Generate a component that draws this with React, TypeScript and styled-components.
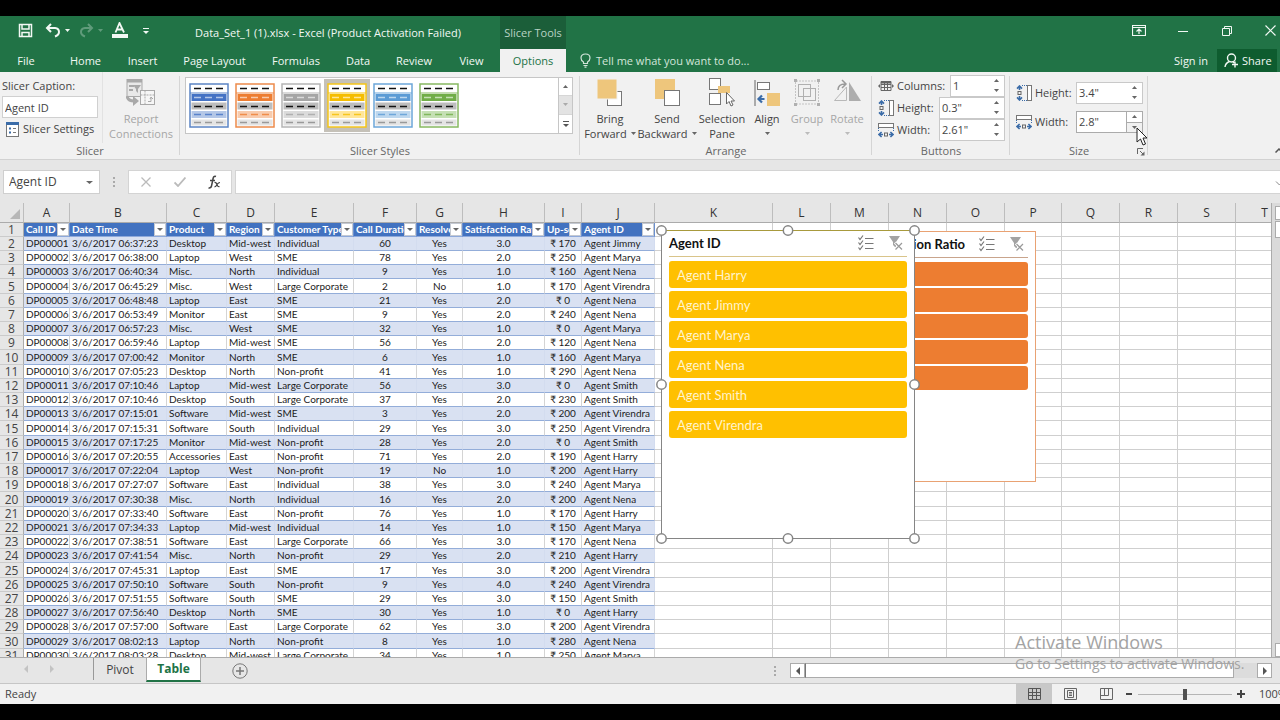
import React from 'react';
import styled, { createGlobalStyle, css } from 'styled-components';

const UI_FONT = '"Open Sans", "Noto Sans", sans-serif';
const CELL_FONT = 'Lato, "Noto Sans", sans-serif';

const GlobalStyle = createGlobalStyle`
  *, *::before, *::after { box-sizing: border-box; }
  body { margin: 0; background: #000; overflow: hidden; }
  button, input { font: inherit; color: inherit; }
  button { border: 0; background: none; padding: 0; cursor: default; }
`;

const Screen = styled.div`
  display: flex;
  flex-direction: column;
  height: 100vh;
  padding: 16px 0;
  background: #000;
  font: 12px/16px ${UI_FONT};
  color: #444;
`;

const Window = styled.main`
  position: relative;
  flex: 1;
  min-height: 0;
  display: flex;
  flex-direction: column;
  background: #e6e6e6;
  overflow: hidden;
`;

/* Title bar and tabs */

const TitleBar = styled.header`
  display: flex;
  height: 33px;
  flex: none;
  background: #217346;
  color: #f2f8f4;
`;

const QuickAccess = styled.div`
  display: flex;
  align-items: center;
  width: 156px;
  padding: 0 0 4px 18px;
  flex: none;
`;

const QuickButton = styled.button<{ $w: number; $dim?: boolean }>`
  width: ${(p) => p.$w}px;
  height: 20px;
  display: flex;
  align-items: center;
  opacity: ${(p) => (p.$dim ? 0.3 : 1)};
`;

const WindowTitle = styled.h1`
  margin: 0;
  width: 344px;
  font-size: 11px;
  font-weight: 400;
  line-height: 34px;
  text-align: center;
  white-space: nowrap;
`;

const ContextTitle = styled.div`
  width: 66px;
  background: #1b5e39;
  color: #b9d3c4;
  font-size: 11px;
  line-height: 34px;
  text-align: center;
  white-space: nowrap;
`;

const WindowControls = styled.div`
  display: flex;
  margin-left: auto;
  padding-bottom: 4px;
  align-items: center;
`;

const ControlButton = styled.button`
  width: 44px;
  height: 28px;
  display: grid;
  place-items: center;
  &:last-child { width: 43px; margin-right: -12px; }
`;

const TabRow = styled.nav`
  display: flex;
  height: 23px;
  flex: none;
  background: #217346;
  color: #f2f8f4;
  font-size: 11px;
`;

const Tab = styled.button<{ $w: number; $active?: boolean; $file?: boolean }>`
  width: ${(p) => p.$w}px;
  line-height: 22px;
  text-align: center;
  white-space: nowrap;
  ${(p) => p.$file && css`margin-right: 4px;`}
  ${(p) =>
    p.$active &&
    css`
      margin-left: 2px;
      background: #f1f1f1;
      color: #217346;
    `}
`;

const TellMe = styled.button`
  display: flex;
  align-items: center;
  gap: 5px;
  margin-left: 14px;
  color: #d3e5da;
  white-space: nowrap;
`;

const Account = styled.div`
  display: flex;
  margin-left: auto;
`;

const SignIn = styled.button`
  padding: 0 9px;
  line-height: 22px;
`;

const Share = styled.button`
  display: flex;
  align-items: center;
  gap: 3px;
  width: 60px;
  margin-right: 3px;
  padding-left: 7px;
  background: #0e5c2f;
`;

/* Ribbon */

const Ribbon = styled.section`
  display: flex;
  flex: none;
  height: 88px;
  background: #f1f1f1;
  border-bottom: 1px solid #d2d2d2;
`;

const Group = styled.div<{ $w: number }>`
  width: ${(p) => p.$w}px;
  flex: none;
  display: flex;
  flex-direction: column;
  position: relative;
  &::after {
    content: '';
    position: absolute;
    right: 0;
    top: 4px;
    bottom: 4px;
    width: 1px;
    background: #d5d5d5;
  }
`;

const GroupBody = styled.div`
  display: flex;
  height: 71px;
`;

const GroupLabel = styled.div`
  display: flex;
  justify-content: center;
  position: relative;
  font-size: 11px;
  line-height: 16px;
  color: #666;
`;

const Launcher = styled.button`
  position: absolute;
  right: 2px;
  top: 4px;
  width: 10px;
  height: 10px;
  line-height: 0;
`;

const CaptionColumn = styled.div`
  width: 103px;
  display: flex;
  flex-direction: column;
  padding: 6px 4px 0 2px;
  border-right: 1px solid #e2e2e2;
`;

const FieldLabel = styled.label`
  font-size: 11px;
  line-height: 16px;
  white-space: nowrap;
`;

const CaptionInput = styled.input`
  height: 22px;
  margin: 2px 0 1px;
  padding: 0 2px;
  border: 1px solid #d0d0d0;
  background: #fff;
  font-size: 11px;
`;

const SettingsButton = styled.button`
  display: flex;
  align-items: center;
  gap: 4px;
  height: 20px;
  padding-left: 4px;
  font-size: 11px;
  white-space: nowrap;
`;

const BigButton = styled.button<{ $w: number; $disabled?: boolean }>`
  width: ${(p) => p.$w}px;
  display: flex;
  flex-direction: column;
  align-items: center;
  padding-top: 6px;
  font-size: 11px;
  line-height: 15px;
  white-space: nowrap;
  color: ${(p) => (p.$disabled ? '#a6a6a6' : '#444')};
  & > svg { flex: none; margin-bottom: 3px; }
`;

const LabelLine = styled.span`
  display: flex;
  align-items: center;
  gap: 4px;
  min-height: 15px;
`;

const ArrangeBody = styled(GroupBody)`
  padding-left: 3px;
`;

const Gallery = styled.div`
  display: flex;
  width: 388px;
  height: 57px;
  margin: 5px 0 0 5px;
  border: 1px solid #c6c6c6;
  background: #fff;
`;

const GalleryItem = styled.button<{ $selected?: boolean }>`
  width: 46px;
  display: grid;
  place-items: center;
  height: 53px;
  margin-top: 1px;
  background: ${(p) => (p.$selected ? '#c5c1b8' : 'transparent')};
`;

const GalleryScroll = styled.div`
  width: 14px;
  margin-left: auto;
  display: grid;
  grid-template-rows: 1fr 1fr 1fr;
  border-left: 1px solid #c6c6c6;
`;

const ScrollButton = styled.button<{ $off?: boolean }>`
  display: grid;
  place-items: center;
  background: ${(p) => (p.$off ? '#e3e3e3' : '#fff')};
  border-bottom: 1px solid #d6d6d6;
  &:last-child { border-bottom: 0; }
`;

const Fields = styled.div<{ $gap: number; $top: number; $left: number }>`
  flex: 1;
  display: flex;
  flex-direction: column;
  gap: ${(p) => p.$gap}px;
  padding: ${(p) => p.$top}px 5px 0 ${(p) => p.$left}px;
`;

const Field = styled.div`
  display: flex;
  align-items: center;
  gap: 3px;
  height: 21px;
  & > svg { flex: none; }
`;

const Spinner = styled.div<{ $w: number; $active?: boolean }>`
  display: flex;
  width: ${(p) => p.$w}px;
  height: 22px;
  margin-left: auto;
  flex: none;
  border: 1px solid ${(p) => (p.$active ? '#ababab' : '#c9c9c9')};
  background: #fff;
`;

const SpinnerInput = styled.input`
  flex: 1;
  min-width: 0;
  border: 0;
  padding: 0 2px;
  font-size: 11px;
  background: transparent;
  outline: 0;
`;

const SpinnerArrows = styled.div<{ $active?: boolean }>`
  width: 16px;
  display: grid;
  grid-template-rows: 1fr 1fr;
  ${(p) =>
    p.$active &&
    css`
      border-left: 1px solid #ababab;
      & > button + button { border-top: 1px solid #ababab; background: #f1f1f1; }
    `}
`;

const ArrowButton = styled.button`
  display: grid;
  place-items: center;
`;

const Collapse = styled.button`
  align-self: flex-end;
  margin: 0 -3px 4px auto;
  height: 10px;
  line-height: 0;
`;

/* Formula bar */

const FormulaBar = styled.div`
  display: flex;
  flex: none;
  height: 43px;
  padding: 10px 0 9px 3px;
`;

const NameBox = styled.div`
  display: flex;
  align-items: center;
  width: 97px;
  padding-right: 6px;
  border: 1px solid #cfcfcf;
  background: #fff;
`;

const NameInput = styled.input`
  flex: 1;
  min-width: 0;
  border: 0;
  padding: 0 0 0 5px;
  outline: 0;
  font-size: 12px;
`;

const Dots = styled.span`
  display: grid;
  place-items: center;
  width: 28px;
`;

const FormulaButtons = styled.div`
  display: flex;
  width: 104px;
  margin-right: 3px;
  border: 1px solid #d4d4d4;
  background: #fff;
  & > button { flex: 1; display: grid; place-items: center; }
`;

const FormulaInput = styled.input`
  flex: 1;
  min-width: 0;
  border: 1px solid #d4d4d4;
  border-right: 0;
  background: #fff;
  outline: 0;
`;

const FormulaExpand = styled.button`
  width: 6px;
  overflow: hidden;
  border: solid #d4d4d4;
  border-width: 1px 0;
  background: #fff;
`;

/* Worksheet */

const SheetArea = styled.section`
  position: relative;
  flex: 1;
  min-height: 0;
  display: flex;
  overflow: hidden;
  border-bottom: 1px solid #ababab;
`;

const SheetView = styled.div`
  flex: 1;
  min-width: 0;
  overflow: hidden;
  border-right: 1px solid #ababab;
  background: #fff;
`;

const SheetTable = styled.table`
  width: 100%;
  min-width: 1294px;
  table-layout: fixed;
  border-collapse: separate;
  border-spacing: 0;
  font: 10px/13px ${CELL_FONT};
  color: #1c1c1c;
  tbody tr { height: 14px; }
  tbody tr:nth-child(5n) { height: 15px; }
  td, th { padding: 0; overflow: hidden; white-space: nowrap; }
`;

const ColumnHead = styled.th`
  height: 20px;
  background: #e6e6e6;
  border-right: 1px solid #bdbdbd;
  border-bottom: 1px solid #ababab;
  font: 400 12px/19px ${UI_FONT};
  color: #333;
  text-align: center;
`;

const Corner = styled(ColumnHead)`
  text-align: right;
  vertical-align: bottom;
  line-height: 0;
`;

const RowHead = styled.th`
  background: #e6e6e6;
  border-right: 1px solid #ababab;
  border-bottom: 1px solid #cbcbcb;
  font: 400 12px/13px ${UI_FONT};
  color: #444;
  text-align: center;
`;

const HeaderCell = styled.th`
  background: #4272c0;
  border-bottom: 1px solid #8ea9db;
  border-right: 1px solid #6a90cf;
  color: #fff;
  text-align: left;
`;

const HeaderInner = styled.div`
  display: flex;
  height: 13px;
  padding-left: 2px;
`;

const HeaderText = styled.span`
  flex: 1;
  min-width: 0;
  overflow: hidden;
`;

const FilterButton = styled.button`
  width: 12px;
  height: 13px;
  flex: none;
  display: grid;
  place-items: center;
  border: 1px solid #c4c9d2;
  background: #fff;
`;

const DataCell = styled.td<{ $band: boolean; $center?: boolean }>`
  && { padding-left: ${(p) => (p.$center ? 0 : 2)}px; }
  background: ${(p) => (p.$band ? '#d9e1f2' : '#fff')};
  border-bottom: 1px solid #93add9;
  border-right: 1px solid ${(p) => (p.$band ? '#d3dcef' : '#d4d4d4')};
  text-align: ${(p) => (p.$center ? 'center' : 'left')};
`;

const EmptyCell = styled.td`
  border-bottom: 1px solid #cfcfcf;
  border-right: 1px solid #cfcfcf;
`;

const VerticalScroll = styled.div`
  width: 8px;
  flex: none;
  display: flex;
  flex-direction: column;
  gap: 1px;
  padding: 3px 0 0 3px;
  overflow: hidden;
  background: #dadada;
`;

const ScrollPiece = styled.button<{ $h: number; $end?: boolean }>`
  width: 15px;
  height: ${(p) => p.$h}px;
  flex: none;
  border: 1px solid #ababab;
  background: #fff;
  ${(p) => p.$end && css`margin-top: auto;`}
`;

/* Slicers float over the cells */

const Slicer = styled.section<{ $x: number; $y: number; $w: number; $h: number; $accent: string }>`
  position: absolute;
  left: ${(p) => p.$x}px;
  top: ${(p) => p.$y}px;
  width: ${(p) => p.$w}px;
  height: ${(p) => p.$h}px;
  padding: 0 7px;
  border: 1px solid ${(p) => p.$accent};
  background: #fff;
`;

const SlicerHead = styled.div<{ $accent: string }>`
  display: flex;
  align-items: center;
  height: 26px;
  margin-bottom: 4px;
  padding: 0 3px 2px 0;
  border-bottom: 1px solid ${(p) => p.$accent};
`;

const SlicerTitle = styled.h2<{ $right?: boolean }>`
  flex: 1;
  margin: 0;
  font: 700 13px/16px ${CELL_FONT};
  color: #111;
  text-align: ${(p) => (p.$right ? 'right' : 'left')};
  white-space: nowrap;
`;

const SlicerTool = styled.button`
  width: 16px;
  height: 16px;
  margin-left: 14px;
  line-height: 0;
`;

const SlicerList = styled.div<{ $gap: number }>`
  display: flex;
  flex-direction: column;
  gap: ${(p) => p.$gap}px;
`;

const SlicerItem = styled.button<{ $h: number; $color: string }>`
  height: ${(p) => p.$h}px;
  padding-left: 8px;
  border-radius: 3px;
  background: ${(p) => p.$color};
  color: #fff3cc;
  font: 13px/16px ${CELL_FONT};
  text-align: left;
`;

const SelectionFrame = styled.svg`
  position: absolute;
  left: 655px;
  top: 21px;
`;

/* Bottom bars */

const SheetTabs = styled.div`
  display: flex;
  flex: none;
  height: 26px;
  border-bottom: 1px solid #c6c6c6;
`;

const TabArrows = styled.div`
  display: flex;
  gap: 22px;
  width: 94px;
  height: 22px;
  padding-left: 24px;
  align-items: center;
  border-right: 1px solid #999;
`;

const SheetTab = styled.button<{ $w: number; $active?: boolean }>`
  width: ${(p) => p.$w}px;
  height: 24px;
  line-height: 22px;
  ${(p) =>
    p.$active &&
    css`
      background: #fff;
      color: #217346;
      font-weight: 700;
      border: solid #ababab;
      border-width: 0 1px;
      border-bottom: 2px solid #217346;
    `}
`;

const AddSheet = styled.button`
  margin-left: 30px;
  width: 18px;
  height: 25px;
  display: grid;
  place-items: center;
`;

const HorizontalScroll = styled.div`
  display: flex;
  align-items: center;
  width: 508px;
  margin-left: auto;
`;

const HTrack = styled.div`
  display: flex;
  width: 482px;
  height: 15px;
  margin-left: 12px;
  background: #dcdcdc;
`;

const HButton = styled.button`
  width: 15px;
  display: grid;
  place-items: center;
  border: 1px solid #ababab;
  background: #fff;
`;

const HThumb = styled.button`
  width: 429px;
  margin-right: auto;
  border: 1px solid #ababab;
  border-left-color: #777;
  background: #fff;
`;

const StatusBar = styled.footer`
  display: flex;
  flex: none;
  height: 20px;
  align-items: center;
  background: #f1f1f1;
  font-size: 11px;
  overflow: hidden;
`;

const StatusText = styled.span`
  padding-left: 5px;
`;

const StatusRight = styled.div`
  display: flex;
  align-items: center;
  height: 20px;
  margin-left: auto;
`;

const ViewButton = styled.button<{ $active?: boolean }>`
  width: 36px;
  height: 20px;
  display: grid;
  place-items: center;
  background: ${(p) => (p.$active ? '#c8c8c8' : 'transparent')};
`;

const ZoomStep = styled.button`
  width: 10px;
  height: 20px;
  display: grid;
  place-items: center;
`;

const ZoomSlider = styled.input`
  appearance: none;
  width: 94px;
  height: 16px;
  margin: 0 4px;
  background: linear-gradient(#b5b5b5, #b5b5b5) center / 100% 1px no-repeat;
  &::-webkit-slider-thumb {
    appearance: none;
    width: 4px;
    height: 11px;
    background: #505050;
  }
`;

const ZoomLabel = styled.button`
  width: 21px;
  margin-left: 13px;
  white-space: nowrap;
  text-align: left;
  overflow: hidden;
`;

const Watermark = styled.aside`
  position: absolute;
  right: 42px;
  bottom: 30px;
  width: 223px;
  color: #a3a3a3;
  font-size: 14px;
  line-height: 20px;
  white-space: nowrap;
  pointer-events: none;
`;

const WatermarkTitle = styled.div`
  font-size: 18px;
  line-height: 24px;
`;

const Pointer = styled.svg`
  position: absolute;
  left: 1136px;
  top: 111px;
  pointer-events: none;
`;

/* Data */

const SHEET_COLUMNS: [string, number][] = [
  ['A', 46], ['B', 97], ['C', 60], ['D', 48], ['E', 79], ['F', 63], ['G', 46], ['H', 82], ['I', 37], ['J', 73],
  ['K', 118], ['L', 58], ['M', 58], ['N', 58], ['O', 58], ['P', 57], ['Q', 58], ['R', 58], ['S', 58],
];
const HEADERS = ['Call ID', 'Date Time', 'Product', 'Region', 'Customer Type', 'Call Duration', 'Resolved', 'Satisfaction Ratio', 'Up-sell', 'Agent ID'];
const CENTERED = [5, 6, 7, 8];

const RECORDS = `06:37:23|Desktop|Mid-west|Individual|60|Yes|3.0|170|Jimmy
06:38:00|Laptop|West|SME|78|Yes|2.0|250|Marya
06:40:34|Misc.|North|Individual|9|Yes|1.0|160|Nena
06:45:29|Misc.|West|Large Corporate|2|No|1.0|170|Virendra
06:48:48|Laptop|East|SME|21|Yes|2.0|0|Nena
06:53:49|Monitor|East|SME|9|Yes|2.0|240|Nena
06:57:23|Misc.|West|SME|32|Yes|1.0|0|Marya
06:59:46|Laptop|Mid-west|SME|56|Yes|2.0|120|Nena
07:00:42|Monitor|North|SME|6|Yes|1.0|160|Marya
07:05:23|Desktop|North|Non-profit|41|Yes|1.0|290|Nena
07:10:46|Laptop|Mid-west|Large Corporate|56|Yes|3.0|0|Smith
07:10:46|Desktop|South|Large Corporate|37|Yes|2.0|230|Smith
07:15:01|Software|Mid-west|SME|3|Yes|2.0|200|Virendra
07:15:31|Software|South|Individual|29|Yes|3.0|250|Virendra
07:17:25|Monitor|Mid-west|Non-profit|28|Yes|2.0|0|Smith
07:20:55|Accessories|East|Non-profit|71|Yes|2.0|190|Harry
07:22:04|Laptop|West|Non-profit|19|No|1.0|200|Harry
07:27:07|Software|East|Individual|38|Yes|3.0|240|Marya
07:30:38|Misc.|North|Individual|16|Yes|2.0|200|Nena
07:33:40|Software|East|Non-profit|76|Yes|1.0|170|Harry
07:34:33|Laptop|Mid-west|Individual|14|Yes|1.0|150|Marya
07:38:51|Software|East|Large Corporate|66|Yes|3.0|170|Nena
07:41:54|Misc.|North|Non-profit|29|Yes|2.0|210|Harry
07:45:31|Laptop|East|SME|17|Yes|3.0|200|Virendra
07:50:10|Software|South|Non-profit|9|Yes|4.0|240|Virendra
07:51:55|Software|South|SME|29|Yes|3.0|150|Smith
07:56:40|Desktop|North|SME|30|Yes|1.0|0|Harry
07:57:00|Software|East|Large Corporate|62|Yes|3.0|200|Virendra
08:02:13|Laptop|North|Non-profit|8|Yes|1.0|280|Nena
08:03:28|Desktop|Mid-west|Large Corporate|34|Yes|1.0|250|Marya`
  .split('\n')
  .map((line, i) => {
    const [time, product, region, customer, duration, resolved, rating, upsell, agent] = line.split('|');
    return [
      `DP${String(i + 1).padStart(5, '0')}`, `3/6/2017 ${time}`, product, region, customer,
      duration, resolved, rating, `₹ ${upsell}`, `Agent ${agent}`,
    ];
  });

const AGENTS = ['Agent Harry', 'Agent Jimmy', 'Agent Marya', 'Agent Nena', 'Agent Smith', 'Agent Virendra'];
const RATINGS = ['1.0', '2.0', '3.0', '4.0', '5.0'];

const STYLES = [
  { name: 'Blue', edge: '#5b84c4', main: '#4472c4', soft: '#b4c7e7' },
  { name: 'Orange', edge: '#ed8b4b', main: '#ed7d31', soft: '#f8cbad' },
  { name: 'Gray', edge: '#b5b5b5', main: '#a5a5a5', soft: '#dbdbdb' },
  { name: 'Gold', edge: '#f5c518', main: '#f5bd00', soft: '#ffe699' },
  { name: 'Light blue', edge: '#6ca6d9', main: '#5b9bd5', soft: '#bdd7ee' },
  { name: 'Green', edge: '#86b860', main: '#70ad47', soft: '#c5e0b4' },
];

/* Icons */

const Triangle = ({ up, size = 5, color = '#666' }: { up?: boolean; size?: number; color?: string }) => (
  <svg width={size} height={3} viewBox="0 0 6 3" preserveAspectRatio="none">
    <path d={up ? 'M0 3L3 0L6 3Z' : 'M0 0H6L3 3Z'} fill={color} />
  </svg>
);

const SideArrow = ({ left, color = '#555' }: { left?: boolean; color?: string }) => (
  <svg width="4" height="8" viewBox="0 0 4 8">
    <path d={left ? 'M4 0V8L0 4Z' : 'M0 0V8L4 4Z'} fill={color} />
  </svg>
);

const StyleThumb = ({ edge, main, soft }: { edge: string; main: string; soft: string }) => (
  <svg width="40" height="45" viewBox="0 0 40 45">
    <rect x="1" y="1" width="38" height="43" fill="#fff" stroke={edge} strokeWidth="1.5" />
    <path d="M1 10H39" stroke={edge} />
    <rect x="2.5" y="11" width="35" height="7" fill={main} />
    <rect x="2.5" y="19.5" width="35" height="7" fill="#bdbdbd" />
    <rect x="2.5" y="28" width="35" height="7" fill={soft} />
    <rect x="2.5" y="36.5" width="35" height="6" fill="#e4e4e4" />
    <g strokeWidth="1.4" strokeDasharray="7 4">
      <path d="M5 5.5H35" stroke="#111" />
      <path d="M5 14.5H35" stroke={soft} />
      <path d="M5 23.5H35" stroke="#111" />
      <path d="M5 31.5H35" stroke={main} strokeOpacity=".8" />
      <path d="M5 39.5H35" stroke="#999" />
    </g>
  </svg>
);

const HeightIcon = () => (
  <svg width="16" height="16" viewBox="0 0 16 16" fill="none">
    <path d="M3.5 1.2V5M1 3.6L3.5 1L6 3.6M3.5 15V11M1 12.4L3.5 15L6 12.4" stroke="#3b6ca8" strokeWidth="1.6" />
    <rect x="2" y="6.5" width="3" height="3" stroke="#666" />
    <path d="M6 .5H11M6 15.5H11" stroke="#3b6ca8" strokeDasharray="1 1" />
    <rect x="11.5" y=".5" width="4" height="15" stroke="#777" fill="#fff" />
  </svg>
);

const WidthIcon = () => (
  <svg width="16" height="16" viewBox="0 0 16 16" fill="none">
    <rect x=".5" y="1.5" width="15" height="4" stroke="#777" fill="#fff" />
    <path d="M.5 6V10M15.5 6V10" stroke="#3b6ca8" strokeDasharray="1 1" />
    <path d="M1 12.5H5M3.6 10L1 12.5L3.6 15M15 12.5H11M12.4 10L15 12.5L12.4 15" stroke="#3b6ca8" strokeWidth="1.6" />
    <rect x="6.5" y="11" width="3" height="3" stroke="#666" />
  </svg>
);

const ColumnsIcon = () => (
  <svg width="16" height="16" viewBox="0 0 16 16" fill="none">
    <path d="M3 3.5H13V12.5H3ZM3 6.5H13M3 9.5H13M6.5 5V12.5M9.5 5V12.5" stroke="#666" />
    <path d="M3 4H13V5.5H3Z" fill="#666" />
    <path d="M2 6L0 8L2 10ZM14 6L16 8L14 10Z" fill="#666" />
  </svg>
);

const ReportIcon = () => (
  <svg width="30" height="30" viewBox="0 0 30 30" fill="none" stroke="#a9a9a9">
    <rect x="1" y="1.5" width="15" height="17" fill="#e9e9e9" />
    <path d="M1 3H16" strokeWidth="3" />
    <path d="M3 8H8M3 12H7" strokeWidth="2" />
    <path d="M7 7H15L12 11V15L10 13V11Z" fill="#a9a9a9" stroke="none" />
    <rect x="14.5" y="12.5" width="14" height="14" fill="#f6f6f6" />
    <path d="M14.5 17H28.500M19 12.500V26.500" strokeDasharray="2 1" />
    <path d="M22 23.500H25V19.500M24 21L25 19L27 21" />
    <path d="M1 18Q2 23 8 23" strokeWidth="3" />
    <path d="M7 18L13 23L7 28Z" fill="#a9a9a9" stroke="none" />
  </svg>
);

const SlicerTools = () => (
  <>
    <SlicerTool aria-label="Multi-select">
      <svg width="16" height="16" viewBox="0 0 16 16" fill="none" stroke="#777">
        <path d="M.5 2.500L2 4.500L5 .5M.5 7.500L2 9.500L5 5.500M.5 12.500L2 14.500L5 10.500" strokeWidth="1.200" />
        <path d="M7 3.500H15.500M7 8.500H15.500M7 13.500H15.500" />
      </svg>
    </SlicerTool>
    <SlicerTool aria-label="Clear filter">
      <svg width="16" height="16" viewBox="0 0 16 16">
        <path d="M1 1H12L8 7V13L5 10V7Z" fill="#a3a3a3" />
        <path d="M7 7.500L14 14.500M14 7.500L7 14.500" stroke="#fff" strokeWidth="3" />
        <path d="M7.500 8L14 14.500M14 8L7.500 14.500" stroke="#999" strokeWidth="1.200" />
      </svg>
    </SlicerTool>
  </>
);

/* Composite controls */

const SpinField = ({ id, label, value, width, active, icon }: {
  id: string; label: string; value: string; width: number; active?: boolean; icon: React.ReactNode;
}) => (
  <Field>
    {icon}
    <FieldLabel htmlFor={id}>{label}</FieldLabel>
    <Spinner $w={width} $active={active}>
      <SpinnerInput id={id} defaultValue={value} />
      <SpinnerArrows $active={active}>
        <ArrowButton aria-label={`Increase ${label}`}><Triangle up /></ArrowButton>
        <ArrowButton aria-label={`Decrease ${label}`}><Triangle /></ArrowButton>
      </SpinnerArrows>
    </Spinner>
  </Field>
);

const TopBars = () => (
  <>
    <TitleBar>
      <QuickAccess>
        <QuickButton $w={27} aria-label="Save">
          <svg width="15" height="15" viewBox="0 0 15 15" fill="none" stroke="currentColor" strokeWidth="1.500">
            <path d="M1.500 1.500H13.500V13.500H1.500ZM4 1.500V6H11V1.500M4 13.500V9.500H11V13.500" />
          </svg>
        </QuickButton>
        <QuickButton $w={34} aria-label="Undo">
          <svg width="26" height="15" viewBox="0 0 26 15" fill="none" stroke="currentColor" strokeWidth="2">
            <path d="M6 1L2 5L6 9M2 5H10Q14 5.500 14 9Q14 12 10 13.500" />
            <path d="M20 6H25L22.500 9Z" fill="currentColor" stroke="none" />
          </svg>
        </QuickButton>
        <QuickButton $w={33} $dim aria-label="Redo">
          <svg width="26" height="15" viewBox="0 0 26 15" fill="none" stroke="currentColor" strokeWidth="2">
            <path d="M9 1L13 5L9 9M13 5H6Q2 5.500 2 9Q2 12 6 13.500" />
            <path d="M19 6H24L21.500 9Z" fill="currentColor" stroke="none" />
          </svg>
        </QuickButton>
        <QuickButton $w={31} aria-label="Font color">
          <svg width="16" height="17" viewBox="0 0 16 17" fill="none" stroke="currentColor">
            <path d="M3.500 10.500L7.500 1L12 10.500M5 7.500H10.500" strokeWidth="1.800" />
            <rect x="0" y="12" width="16" height="4" fill="currentColor" stroke="none" />
          </svg>
        </QuickButton>
        <QuickButton $w={8} aria-label="Customize toolbar">
          <svg width="6" height="8" viewBox="0 0 6 8"><path d="M0 1.500H6" stroke="currentColor" /><path d="M0 4H6L3 7Z" fill="currentColor" /></svg>
        </QuickButton>
      </QuickAccess>
      <WindowTitle>Data_Set_1 (1).xlsx - Excel (Product Activation Failed)</WindowTitle>
      <ContextTitle>Slicer Tools</ContextTitle>
      <WindowControls>
        <ControlButton aria-label="Ribbon display options">
          <svg width="14" height="11" viewBox="0 0 14 11" fill="none" stroke="currentColor"><path d="M.5 .5H13.500V10.500H.5ZM.5 2.500H13.500M7 9V4.500M4.500 6.500L7 4L9.500 6.500" strokeWidth="1.200" /></svg>
        </ControlButton>
        <ControlButton aria-label="Minimize">
          <svg width="10" height="10" viewBox="0 0 10 10"><path d="M0 5.500H10" stroke="currentColor" /></svg>
        </ControlButton>
        <ControlButton aria-label="Restore">
          <svg width="10" height="10" viewBox="0 0 10 10" fill="none" stroke="currentColor"><path d="M.5 2.500H7.500V9.500H.5ZM2.500 2.500V.5H9.500V7.500H7.500" /></svg>
        </ControlButton>
        <ControlButton aria-label="Close">
          <svg width="11" height="11" viewBox="0 0 11 11"><path d="M.5 .5L10.500 10.500M10.500 .5L.5 10.500" stroke="currentColor" strokeWidth="1.200" /></svg>
        </ControlButton>
      </WindowControls>
    </TitleBar>
    <TabRow>
      <Tab $w={52} $file>File</Tab>
      <Tab $w={59}>Home</Tab>
      <Tab $w={55}>Insert</Tab>
      <Tab $w={89}>Page Layout</Tab>
      <Tab $w={74}>Formulas</Tab>
      <Tab $w={50}>Data</Tab>
      <Tab $w={62}>Review</Tab>
      <Tab $w={53}>View</Tab>
      <Tab $w={66} $active>Options</Tab>
      <TellMe>
        <svg width="11" height="15" viewBox="0 0 11 15" fill="none" stroke="currentColor" strokeWidth="1.200">
          <path d="M3.500 10.500V9Q1 7.500 1 5Q1 1 5.500 1Q10 1 10 5Q10 7.500 7.500 9V10.500ZM3.500 12.500H7.500M4.500 14.200H6.500" />
        </svg>
        Tell me what you want to do...
      </TellMe>
      <Account>
        <SignIn>Sign in</SignIn>
        <Share>
          <svg width="15" height="15" viewBox="0 0 15 15" fill="none" stroke="currentColor" strokeWidth="1.400">
            <circle cx="7.500" cy="5" r="4" /><path d="M1 14Q1.500 10 5.500 8.500M9 8.500L10 10M8 11.500H14M11 8.500V14.500" />
          </svg>
          Share
        </Share>
      </Account>
    </TabRow>
  </>
);

const RibbonBar = () => (
  <Ribbon>
    <Group $w={180}>
      <GroupBody>
        <CaptionColumn>
          <FieldLabel htmlFor="caption">Slicer Caption:</FieldLabel>
          <CaptionInput id="caption" defaultValue="Agent ID" />
          <SettingsButton>
            <svg width="13" height="15" viewBox="0 0 13 15" fill="none">
              <rect x=".5" y=".5" width="12" height="14" fill="#fff" stroke="#777" />
              <path d="M0 1.500H13" stroke="#3b6ca8" strokeWidth="3" />
              <path d="M3 6.500H5M3 10.500H5" stroke="#3b6ca8" strokeWidth="2" />
              <path d="M7 6.500H10M7 10.500H10" stroke="#777" />
            </svg>
            Slicer Settings
          </SettingsButton>
        </CaptionColumn>
        <BigButton $w={76} $disabled>
          <ReportIcon />
          <LabelLine>Report</LabelLine>
          <LabelLine>Connections</LabelLine>
        </BigButton>
      </GroupBody>
      <GroupLabel>Slicer</GroupLabel>
    </Group>
    <Group $w={400}>
      <GroupBody>
        <Gallery>
          {STYLES.map((s) => (
            <GalleryItem key={s.name} aria-label={`${s.name} slicer style`} $selected={s.name === 'Gold'}>
              <StyleThumb edge={s.edge} main={s.main} soft={s.soft} />
            </GalleryItem>
          ))}
          <GalleryScroll>
            <ScrollButton aria-label="Previous styles"><Triangle up /></ScrollButton>
            <ScrollButton aria-label="Next styles" $off><Triangle color="#aaa" /></ScrollButton>
            <ScrollButton aria-label="More styles">
              <svg width="6" height="6" viewBox="0 0 6 6"><path d="M0 .5H6" stroke="#555" /><path d="M0 3H6L3 6Z" fill="#555" /></svg>
            </ScrollButton>
          </GalleryScroll>
        </Gallery>
      </GroupBody>
      <GroupLabel>Slicer Styles</GroupLabel>
    </Group>
    <Group $w={292}>
      <ArrangeBody>
        <BigButton $w={54}>
          <svg width="30" height="30" viewBox="0 0 30 30"><rect x="12.500" y="13.500" width="14" height="14" fill="#fff" stroke="#777" /><rect x="2" y="1" width="20" height="20" fill="#eec67c" stroke="#f1f1f1" /></svg>
          <LabelLine>Bring</LabelLine>
          <LabelLine>Forward <Triangle /></LabelLine>
        </BigButton>
        <BigButton $w={60}>
          <svg width="30" height="30" viewBox="0 0 30 30"><rect x="3" y="1" width="20" height="20" fill="#eec67c" /><rect x="12.500" y="12.500" width="15" height="15" fill="#fff" stroke="#777" /></svg>
          <LabelLine>Send</LabelLine>
          <LabelLine>Backward <Triangle /></LabelLine>
        </BigButton>
        <BigButton $w={50}>
          <svg width="30" height="30" viewBox="0 0 30 30">
            <rect x="2.500" y=".5" width="11" height="11" fill="#fff" stroke="#777" />
            <rect x="2.500" y="15.500" width="11" height="11" fill="#fff" stroke="#777" />
            <rect x="11" y="8" width="12" height="7" fill="#eec67c" />
            <path d="M19.500 14.500V26L22 23.500L24 28L26 27L24 23H27.500Z" fill="#fff" stroke="#666" />
          </svg>
          <LabelLine>Selection</LabelLine>
          <LabelLine>Pane</LabelLine>
        </BigButton>
        <BigButton $w={40}>
          <svg width="30" height="30" viewBox="0 0 30 30">
            <path d="M3 2V28" stroke="#666" />
            <rect x="5.500" y="4.500" width="12" height="7" fill="#fff" stroke="#777" />
            <rect x="15" y="15" width="13" height="13" fill="#eec67c" />
            <path d="M12.500 21H7M10 17.500L6.500 21L10 24.500" fill="none" stroke="#3b6ca8" strokeWidth="2.200" />
          </svg>
          <LabelLine>Align</LabelLine>
          <LabelLine><Triangle /></LabelLine>
        </BigButton>
        <BigButton $w={40} $disabled>
          <svg width="30" height="30" viewBox="0 0 30 30" fill="none" stroke="#b0b0b0">
            <path d="M4 3H26M4 26H26M3.500 4V25M26.500 4V25" strokeDasharray="2 1" strokeWidth=".7" />
            <rect x="6.500" y="6.500" width="12" height="12" /><rect x="11.500" y="10.500" width="12" height="12" />
            <path d="M2 1H5V4H2ZM25 1H28V4H25ZM2 25H5V28H2ZM25 25H28V28H25Z" fill="#b0b0b0" stroke="none" />
          </svg>
          <LabelLine>Group</LabelLine>
          <LabelLine><Triangle color="#bbb" /></LabelLine>
        </BigButton>
        <BigButton $w={40} $disabled>
          <svg width="30" height="30" viewBox="0 0 30 30" fill="none">
            <path d="M14.500 9V22.500H2.500Z" stroke="#b8b8b8" /><path d="M17 4V23H29Z" fill="#adadad" />
            <path d="M6 12Q6 6 13 6M10 2L14 6L10 10" stroke="#999" strokeWidth="1.500" />
          </svg>
          <LabelLine>Rotate</LabelLine>
          <LabelLine><Triangle color="#bbb" /></LabelLine>
        </BigButton>
      </ArrangeBody>
      <GroupLabel>Arrange</GroupLabel>
    </Group>
    <Group $w={138}>
      <GroupBody>
        <Fields $gap={1} $top={3} $left={6}>
          <SpinField id="columns" label="Columns:" value="1" width={55} icon={<ColumnsIcon />} />
          <SpinField id="button-height" label="Height:" value={'0.3"'} width={66} icon={<HeightIcon />} />
          <SpinField id="button-width" label="Width:" value={'2.61"'} width={66} icon={<WidthIcon />} />
        </Fields>
      </GroupBody>
      <GroupLabel>Buttons</GroupLabel>
    </Group>
    <Group $w={138}>
      <GroupBody>
        <Fields $gap={8} $top={10} $left={6}>
          <SpinField id="slicer-height" label="Height:" value={'3.4"'} width={67} icon={<HeightIcon />} />
          <SpinField id="slicer-width" label="Width:" value={'2.8"'} width={67} active icon={<WidthIcon />} />
        </Fields>
      </GroupBody>
      <GroupLabel>
        Size
        <Launcher aria-label="Size and properties">
          <svg width="8" height="8" viewBox="0 0 8 8" fill="none"><path d="M.5 6V.5H6M3 3L6.500 6.500" stroke="#666" /><path d="M7.500 3.500V7.500H3.500Z" fill="#666" /></svg>
        </Launcher>
      </GroupLabel>
    </Group>
    <Collapse aria-label="Collapse the ribbon">
      <svg width="8" height="5" viewBox="0 0 8 5" fill="none"><path d="M.5 4.500L4 1L7.500 4.500" stroke="#555" strokeWidth="1.500" /></svg>
    </Collapse>
  </Ribbon>
);

const Worksheet = () => (
  <SheetArea>
    <SheetView>
      <SheetTable>
        <colgroup>
          <col width={24} />
          {SHEET_COLUMNS.map(([name, width]) => <col key={name} width={width} />)}
          <col />
        </colgroup>
        <thead>
          <tr>
            <Corner aria-label="Select all">
              <svg width="14" height="14" viewBox="0 0 14 14"><path d="M11 1V11H1Z" fill="#b7b7b7" /></svg>
            </Corner>
            {SHEET_COLUMNS.map(([name]) => <ColumnHead key={name}>{name}</ColumnHead>)}
            <ColumnHead>T</ColumnHead>
          </tr>
        </thead>
        <tbody>
          <tr>
            <RowHead>1</RowHead>
            {HEADERS.map((h) => (
              <HeaderCell key={h}>
                <HeaderInner>
                  <HeaderText>{h}</HeaderText>
                  <FilterButton aria-label={`Filter ${h}`}><Triangle size={6} /></FilterButton>
                </HeaderInner>
              </HeaderCell>
            ))}
            {Array.from({ length: 10 }, (_, i) => <EmptyCell key={i} />)}
          </tr>
          {RECORDS.map((record, r) => (
            <tr key={record[0]}>
              <RowHead>{r + 2}</RowHead>
              {record.map((value, c) => (
                <DataCell key={c} $band={r % 2 === 0} $center={CENTERED.includes(c)}>{value}</DataCell>
              ))}
              {Array.from({ length: 10 }, (_, i) => <EmptyCell key={i} />)}
            </tr>
          ))}
        </tbody>
      </SheetTable>
    </SheetView>
    <VerticalScroll>
      <ScrollPiece $h={14} aria-label="Scroll up" />
      <ScrollPiece $h={17} aria-label="Scroll position" />
      <ScrollPiece $h={14} $end aria-label="Scroll down" />
    </VerticalScroll>

    <Slicer $x={840} $y={28} $w={196} $h={251} $accent="#e9a273">
      <SlicerHead $accent="#c9a48c">
        <SlicerTitle $right>Satisfaction Ratio</SlicerTitle>
        <SlicerTools />
      </SlicerHead>
      <SlicerList $gap={2}>
        {RATINGS.map((r) => <SlicerItem key={r} aria-label={r} $h={24} $color="#ed7d31" />)}
      </SlicerList>
    </Slicer>
    <Slicer $x={661} $y={27} $w={254} $h={309} $accent="#d5c04a">
      <SlicerHead $accent="#d9c48a">
        <SlicerTitle>Agent ID</SlicerTitle>
        <SlicerTools />
      </SlicerHead>
      <SlicerList $gap={3}>
        {AGENTS.map((a) => <SlicerItem key={a} $h={27} $color="#ffc000">{a}</SlicerItem>)}
      </SlicerList>
    </Slicer>
    <SelectionFrame width="266" height="322" viewBox="0 0 266 322" fill="none" stroke="#858585">
      <path d="M6.500 6.500V314.500H259.500V6.500" />
      <path d="M6.500 6.500H259.500" stroke="#a89a3c" />
      <g fill="#fff" strokeWidth="1.500">
        {[[6.5, 6.5], [133, 6.5], [259.5, 6.5], [6.5, 160.5], [259.5, 160.5], [6.5, 314.5], [133, 314.5], [259.5, 314.5]].map(([x, y]) => (
          <circle key={`${x}-${y}`} cx={x} cy={y} r="4.700" />
        ))}
      </g>
    </SelectionFrame>
  </SheetArea>
);

export default function App() {
  return (
    <Screen>
      <GlobalStyle />
      <Window>
        <TopBars />
        <RibbonBar />
        <FormulaBar>
          <NameBox>
            <NameInput aria-label="Name box" defaultValue="Agent ID" />
            <Triangle size={7} />
          </NameBox>
          <Dots>
            <svg width="2" height="10" viewBox="0 0 2 10"><path d="M0 0H2V2H0ZM0 4H2V6H0ZM0 8H2V10H0Z" fill="#aaa" /></svg>
          </Dots>
          <FormulaButtons>
            <button aria-label="Cancel"><svg width="10" height="10" viewBox="0 0 10 10"><path d="M.5 .5L9.500 9.500M9.500 .5L.5 9.500" stroke="#bbb" strokeWidth="1.300" /></svg></button>
            <button aria-label="Enter"><svg width="12" height="10" viewBox="0 0 12 10"><path d="M.5 5.500L4 9L11.500 .5" fill="none" stroke="#bbb" strokeWidth="1.800" /></svg></button>
            <button aria-label="Insert function">
              <svg width="13" height="14" viewBox="0 0 13 14" fill="none" stroke="#444">
                <path d="M8 1.500Q5.500 .5 5 4L3.500 11Q3 13.500 .5 13M2 5.500H7" strokeWidth="1.500" />
                <path d="M6.500 7.500Q8 7 9 9.500Q9.800 12.200 11.500 11.500M12 7.500Q10.500 7.500 9 9.500Q8 11.800 6.500 11.800" strokeWidth="1.200" />
              </svg>
            </button>
          </FormulaButtons>
          <FormulaInput aria-label="Formula bar" />
          <FormulaExpand aria-label="Expand formula bar">
            <svg width="8" height="5" viewBox="0 0 8 5" fill="none"><path d="M2 .5L5.500 4L9 .5" stroke="#888" /></svg>
          </FormulaExpand>
        </FormulaBar>
        <Worksheet />
        <SheetTabs>
          <TabArrows><SideArrow left color="#c3c3c3" /><SideArrow color="#c3c3c3" /></TabArrows>
          <SheetTab $w={52}>Pivot</SheetTab>
          <SheetTab $w={55} $active>Table</SheetTab>
          <AddSheet aria-label="New sheet">
            <svg width="16" height="16" viewBox="0 0 16 16" fill="none" stroke="#777"><circle cx="8" cy="8" r="7.200" /><path d="M8 4V12M4 8H12" strokeWidth="1.500" /></svg>
          </AddSheet>
          <HorizontalScroll>
            <svg width="6" height="10" viewBox="0 0 6 10"><path d="M2 0H4V2H2ZM2 4H4V6H2ZM2 8H4V10H2Z" fill="#aaa" /></svg>
            <HTrack>
              <HButton aria-label="Scroll left"><SideArrow left /></HButton>
              <HThumb aria-label="Horizontal scroll position" />
              <HButton aria-label="Scroll right"><SideArrow /></HButton>
            </HTrack>
          </HorizontalScroll>
        </SheetTabs>
        <StatusBar>
          <StatusText>Ready</StatusText>
          <StatusRight>
            <ViewButton $active aria-label="Normal view">
              <svg width="13" height="12" viewBox="0 0 13 12" fill="none" stroke="#555"><path d="M.5 .5H12.500V11.500H.5ZM.5 4.500H12.500M.5 7.500H12.500M4.500 .5V11.500M8.500 .5V11.500" /></svg>
            </ViewButton>
            <ViewButton aria-label="Page layout view">
              <svg width="13" height="12" viewBox="0 0 13 12" fill="none" stroke="#666"><path d="M.5 .5H12.500V11.500H.5ZM3.500 2.500H9.500V9.500H3.500ZM5 4.500H8M5 6H8M5 7.500H8" /></svg>
            </ViewButton>
            <ViewButton aria-label="Page break view">
              <svg width="13" height="12" viewBox="0 0 13 12" fill="none" stroke="#666"><path d="M.5 .5H12.500V11.500H.5ZM.5 7.500H8.500V.5M4.500 .5V7.500" /></svg>
            </ViewButton>
            <ZoomStep aria-label="Zoom out"><svg width="6" height="8" viewBox="0 0 6 8"><path d="M0 4H6" stroke="#444" strokeWidth="2" /></svg></ZoomStep>
            <ZoomSlider type="range" min="0" max="100" defaultValue="50" aria-label="Zoom" />
            <ZoomStep aria-label="Zoom in"><svg width="8" height="8" viewBox="0 0 8 8"><path d="M0 4H8M4 0V8" stroke="#444" strokeWidth="2" /></svg></ZoomStep>
            <ZoomLabel>100%</ZoomLabel>
          </StatusRight>
        </StatusBar>
        <Watermark>
          <WatermarkTitle>Activate Windows</WatermarkTitle>
          Go to Settings to activate Windows.
        </Watermark>
        <Pointer width="12" height="20" viewBox="0 0 12 20">
          <path d="M1 1V15L4.500 12L7 18L9.500 17L7 11H11Z" fill="#fff" stroke="#222" />
        </Pointer>
      </Window>
    </Screen>
  );
}
